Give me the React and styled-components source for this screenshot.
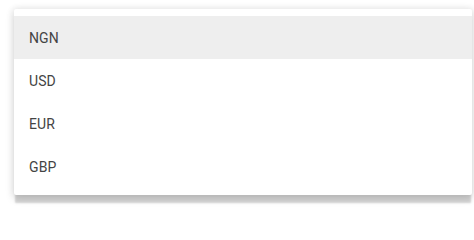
import { useState } from 'react';
import styled, { createGlobalStyle } from 'styled-components';

const GlobalStyle = createGlobalStyle`
  html, body {
    margin: 0;
    padding: 0;
    background: #ffffff;
  }
  body {
    font-family: Roboto, 'Helvetica Neue', Arial, sans-serif;
  }
`;

const currencies = ['NGN', 'USD', 'EUR', 'GBP'];

export default function App() {
  const [selected, setSelected] = useState('NGN');

  return (
    <>
      <GlobalStyle />
      <Page>
        <Menu role="listbox">
          {currencies.map((code) => (
            <MenuItem
              key={code}
              role="option"
              active={selected === code}
              onClick={() => setSelected(code)}
            >
              {code}
            </MenuItem>
          ))}
        </Menu>
      </Page>
    </>
  );
}

const Page = styled.div`
  width: 474px;
  height: 214px;
  padding: 9px 2px 0 14px;
  box-sizing: border-box;
  overflow: hidden;
`;

const Menu = styled.ul`
  list-style: none;
  margin: 0;
  padding: 7px 0 7px;
  background: #ffffff;
  border-radius: 2px;
  box-shadow:
    0px 9px 2px -1px rgba(0, 0, 0, 0.17),
    0px 3px 9px 1px rgba(0, 0, 0, 0.11),
    0px 0px 7px 1px rgba(0, 0, 0, 0.07);
`;

const MenuItem = styled.li`
  height: 43px;
  display: flex;
  align-items: center;
  padding: 0 15px;
  font-size: 14px;
  color: #444444;
  letter-spacing: 0.1px;
  cursor: pointer;
  background: ${(props) => (props.active ? '#eeeeee' : 'transparent')};

  &:hover {
    background: ${(props) => (props.active ? '#eeeeee' : '#f5f5f5')};
  }
`;
